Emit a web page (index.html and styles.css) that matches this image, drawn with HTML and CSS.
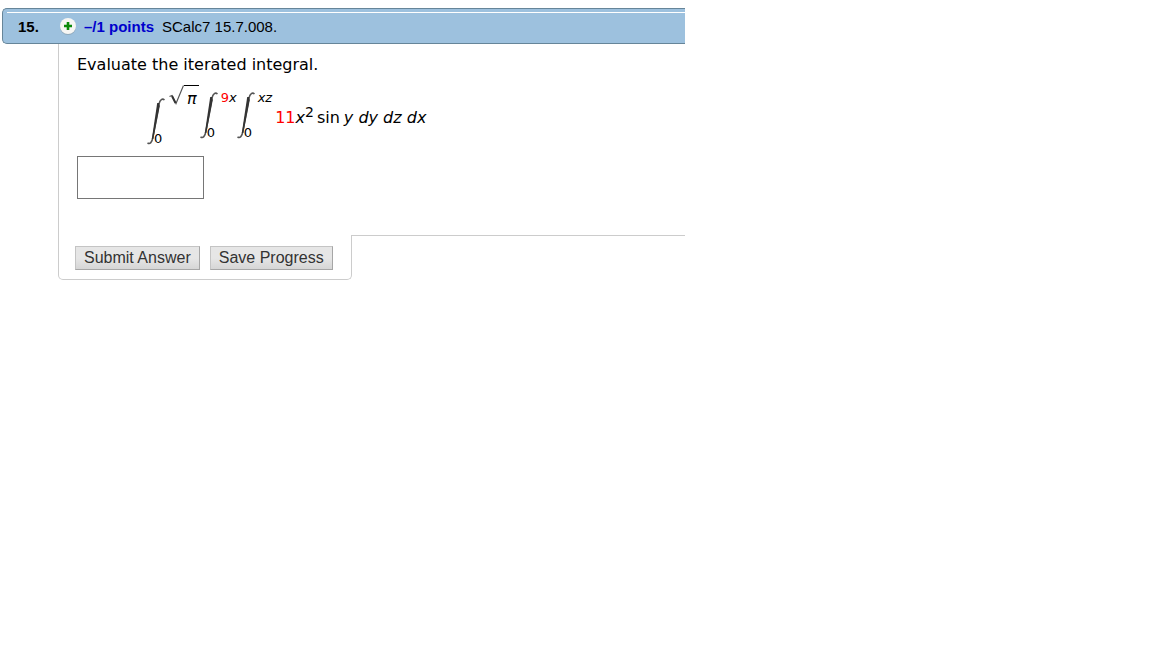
FILE: index.html
```
<!DOCTYPE html>
<html lang="en">
<head>
    <meta charset="UTF-8">
    <meta name="viewport" content="width=device-width, initial-scale=1.0">
    <title>SCalc7 15.7.008</title>
    <link rel="stylesheet" href="styles.css">
</head>
<body>
    <main class="question">
        <header class="question-header">
            <span class="number">15.</span>
            <svg class="plus" viewBox="0 0 18 18" aria-hidden="true">
                <circle cx="9" cy="10" r="8" fill="#8fa9bb"/>
                <circle cx="9" cy="9" r="8" fill="#f6f6f4"/>
                <path d="M9 5v8M5 9h8" stroke="#0a8a0a" stroke-width="2.6"/>
            </svg>
            <a class="points" href="#">–/1 points</a>
            <span class="source">SCalc7 15.7.008.</span>
        </header>

        <form class="question-form">
            <div class="question-body">
                <label class="prompt" for="answer">Evaluate the iterated integral.</label>

                <div class="formula">
                    <div class="integral tall">
                        <svg class="sign" viewBox="0 0 18 47" aria-hidden="true">
                            <path d="M17.500 2C15.500 0 13 1.500 12 6L6 39C5 44.500 3 46.500 0.500 45" fill="none" stroke="#555" stroke-width="1.500"/>
                            <path d="M12 5L10.200 5L4.800 41L6.300 41L12.800 8Z" fill="#333"/>
                        </svg>
                        <span class="upper root">
                            <svg class="radical" viewBox="0 0 15 20" aria-hidden="true">
                                <path d="M0.500 11.500L3 10.500L7 18.500L14.500 0.500" fill="none" stroke="#555" stroke-width="1.200"/>
                                <path d="M3 11L6.500 18" stroke="#333" stroke-width="2"/>
                            </svg>
                            <i class="radicand">π</i>
                        </span>
                        <span class="lower">0</span>
                    </div>
                    <div class="integral">
                        <svg class="sign" viewBox="0 0 18 47" aria-hidden="true">
                            <path d="M17.500 2C15.500 0 13 1.500 12 6L6 39C5 44.500 3 46.500 0.500 45" fill="none" stroke="#555" stroke-width="1.500"/>
                            <path d="M12 5L10.200 5L4.800 41L6.300 41L12.800 8Z" fill="#333"/>
                        </svg>
                        <span class="upper"><span class="value">9</span><i>x</i></span>
                        <span class="lower">0</span>
                    </div>
                    <div class="integral">
                        <svg class="sign" viewBox="0 0 18 47" aria-hidden="true">
                            <path d="M17.500 2C15.500 0 13 1.500 12 6L6 39C5 44.500 3 46.500 0.500 45" fill="none" stroke="#555" stroke-width="1.500"/>
                            <path d="M12 5L10.200 5L4.800 41L6.300 41L12.800 8Z" fill="#333"/>
                        </svg>
                        <span class="upper"><i>xz</i></span>
                        <span class="lower">0</span>
                    </div>
                    <div class="integrand"><span class="value">11</span><i>x</i><sup>2</sup><span class="function">sin</span><i>y dy dz dx</i></div>
                </div>

                <input class="answer" type="text" id="answer">
            </div>

            <div class="question-footer">
                <div class="actions">
                    <button type="submit">Submit Answer</button>
                    <button type="button">Save Progress</button>
                </div>
                <div class="rule"></div>
            </div>
        </form>
    </main>
</body>
</html>
```

FILE: styles.css
```
/* General */
* {
    box-sizing: border-box;
}

body {
    margin: 8px 0 0 2px;
    background-color: #ffffff;
    color: #000000;
    font-family: "DejaVu Sans", sans-serif;
    font-size: 16px;
}

.question {
    max-width: 683px;
}

/* Header bar */
.question-header {
    display: flex;
    align-items: center;
    height: 36px;
    padding-left: 15px;
    background: linear-gradient(#ffffff, #ffffff) 4px 3px / 100% 1px no-repeat #9dc1de;
    border: 1px solid #668599;
    border-right: none;
    border-radius: 5px 0 0 5px;
    font-family: "Liberation Sans", Arial, sans-serif;
    font-size: 15px;
}

.number {
    width: 41px;
    font-weight: bold;
}

.plus {
    width: 18px;
    height: 18px;
    margin-right: 7px;
}

.points {
    margin-right: 8px;
    color: #0000cc;
    font-weight: bold;
    text-decoration: none;
}

/* Question */
.question-body {
    min-height: 191px;
    margin-left: 56px;
    padding: 11px 18px 0;
    border-left: 1px solid #cccccc;
}

.prompt {
    display: block;
    line-height: 20px;
}

.value {
    color: #ff0000;
}

/* Formula */
.formula {
    display: flex;
    align-items: flex-start;
    margin: 10px 0 11px 70px;
}

.integral {
    display: grid;
    grid-template-columns: 18px auto;
    height: 47px;
    margin-top: 7px;
    font-size: 13px;
    line-height: 12px;
}

.integral.tall {
    height: 60px;
    margin: 0 1px 0 0;
}

.sign {
    grid-row: 1 / 3;
    align-self: end;
    width: 18px;
    height: 47px;
}

.upper {
    padding-left: 3px;
}

.lower {
    align-self: end;
    margin-left: -11px;
}

.root {
    display: flex;
    padding-left: 4px;
}

.radical {
    width: 15px;
    height: 20px;
}

.radicand {
    height: 20px;
    padding: 7px 2px 0 3px;
    border-top: 1px solid #000000;
    font-size: 16px;
}

.integrand {
    margin: 23px 0 0 3px;
    line-height: 20px;
    white-space: nowrap;
}

.integrand sup {
    font-size: 14px;
    line-height: 0;
}

.function {
    margin: 0 4px 0 3px;
}

.answer {
    display: block;
    width: 127px;
    height: 43px;
    padding: 4px 8px;
    border: 1px solid #767676;
    font-size: 16px;
}

/* Buttons */
.question-footer {
    display: flex;
    margin-left: 56px;
}

.actions {
    display: flex;
    gap: 10px;
    padding: 11px 18px 9px 16px;
    border: 1px solid #cccccc;
    border-top: none;
    border-radius: 0 0 5px 5px;
}

.rule {
    flex: 1;
    border-top: 1px solid #cccccc;
}

button {
    height: 24px;
    padding: 0 8px;
    background: linear-gradient(#e6e6e6 50%, #d6d6d6);
    border: 1px solid #c4c4c4;
    border-right-color: #a6a6a6;
    border-bottom-color: #a6a6a6;
    color: #333333;
    font-family: "Liberation Sans", Arial, sans-serif;
    font-size: 16px;
    cursor: pointer;
}
```
